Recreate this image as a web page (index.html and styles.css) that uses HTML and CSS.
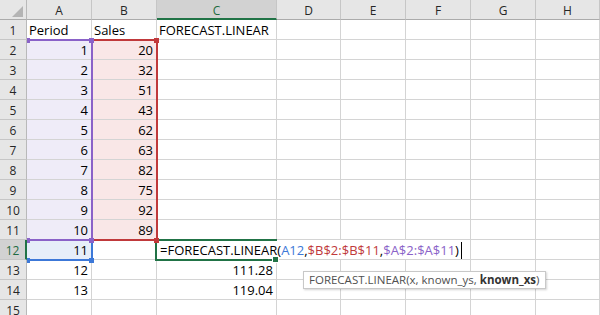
FILE: index.html
```html
<!DOCTYPE html>
<html>
<head>
<meta charset="utf-8">
<link rel="stylesheet" href="styles.css">
</head>
<body>
<div class="sheet">
  <div class="corner"><svg width="27" height="20" viewBox="0 0 27 20"><polygon points="23,6 23,17 12,17" fill="#b4b4b4"/></svg></div>
  <div class="h">A</div><div class="h">B</div><div class="h hsel">C</div><div class="h">D</div><div class="h">E</div><div class="h">F</div><div class="h">G</div><div class="h">H</div>

  <div class="rh">1</div><div class="c">Period</div><div class="c">Sales</div><div class="c">FORECAST.LINEAR</div><div class="c"></div><div class="c"></div><div class="c"></div><div class="c"></div><div class="c"></div>
  <div class="rh">2</div><div class="c n pa">1</div><div class="c n pb">20</div><div class="c"></div><div class="c"></div><div class="c"></div><div class="c"></div><div class="c"></div><div class="c"></div>
  <div class="rh">3</div><div class="c n pa">2</div><div class="c n pb">32</div><div class="c"></div><div class="c"></div><div class="c"></div><div class="c"></div><div class="c"></div><div class="c"></div>
  <div class="rh">4</div><div class="c n pa">3</div><div class="c n pb">51</div><div class="c"></div><div class="c"></div><div class="c"></div><div class="c"></div><div class="c"></div><div class="c"></div>
  <div class="rh">5</div><div class="c n pa">4</div><div class="c n pb">43</div><div class="c"></div><div class="c"></div><div class="c"></div><div class="c"></div><div class="c"></div><div class="c"></div>
  <div class="rh">6</div><div class="c n pa">5</div><div class="c n pb">62</div><div class="c"></div><div class="c"></div><div class="c"></div><div class="c"></div><div class="c"></div><div class="c"></div>
  <div class="rh">7</div><div class="c n pa">6</div><div class="c n pb">63</div><div class="c"></div><div class="c"></div><div class="c"></div><div class="c"></div><div class="c"></div><div class="c"></div>
  <div class="rh">8</div><div class="c n pa">7</div><div class="c n pb">82</div><div class="c"></div><div class="c"></div><div class="c"></div><div class="c"></div><div class="c"></div><div class="c"></div>
  <div class="rh">9</div><div class="c n pa">8</div><div class="c n pb">75</div><div class="c"></div><div class="c"></div><div class="c"></div><div class="c"></div><div class="c"></div><div class="c"></div>
  <div class="rh">10</div><div class="c n pa">9</div><div class="c n pb">92</div><div class="c"></div><div class="c"></div><div class="c"></div><div class="c"></div><div class="c"></div><div class="c"></div>
  <div class="rh">11</div><div class="c n pa">10</div><div class="c n pb">89</div><div class="c"></div><div class="c"></div><div class="c"></div><div class="c"></div><div class="c"></div><div class="c"></div>
  <div class="rh rsel">12</div><div class="c n bl">11</div><div class="c"></div><div class="c edit"><span>=FORECAST.LINEAR(</span><span class="fb">A12</span><span>,</span><span class="fr">$B$2:$B$11</span><span>,</span><span class="fp">$A$2:$A$11</span><span>)</span><span class="caret"></span></div><div class="c nor"></div><div class="c nor"></div><div class="c"></div><div class="c"></div><div class="c"></div>
  <div class="rh">13</div><div class="c n">12</div><div class="c"></div><div class="c n">111.28</div><div class="c"></div><div class="c"></div><div class="c"></div><div class="c"></div><div class="c"></div>
  <div class="rh">14</div><div class="c n">13</div><div class="c"></div><div class="c n">119.04</div><div class="c"></div><div class="c"></div><div class="c"></div><div class="c"></div><div class="c"></div>
  <div class="rh">15</div><div class="c"></div><div class="c"></div><div class="c"></div><div class="c"></div><div class="c"></div><div class="c"></div><div class="c"></div><div class="c"></div>

  <div class="rng rng-red"></div>
  <div class="rng rng-blue"></div>
  <div class="rng rng-purple"></div>
  <div class="rng active"></div>

  <div class="hd hd-red" style="left:154px;top:38px"></div>
  <div class="hd hd-red" style="left:154px;top:238px"></div>
  <div class="hd hd-blue" style="left:27px;top:258px;width:3px"></div>
  <div class="hd hd-blue" style="left:89px;top:258px"></div>
  <div class="hd hd-purple" style="left:27px;top:38px;width:3px"></div>
  <div class="hd hd-purple" style="left:89px;top:38px"></div>
  <div class="hd hd-purple" style="left:27px;top:238px;width:3px"></div>
  <div class="hd hd-purple" style="left:89px;top:238px"></div>
  <div class="hd hd-green" style="left:273px;top:257px"></div>

  <div class="tip">FORECAST.LINEAR(x, known_ys, <b>known_xs</b>)</div>
</div>
</body>
</html>
```
FILE: styles.css
```css
html, body {
  margin: 0;
  padding: 0;
  background: #ffffff;
  overflow: hidden;
}
.sheet {
  position: relative;
  width: 600px;
  height: 315px;
  overflow: hidden;
  display: grid;
  grid-template-columns: 27px 65px 65px 120px 64px 65px 65px 65px 64px;
  grid-template-rows: repeat(16, 20px);
  font-family: "Open Sans", sans-serif;
  color: #000;
}
.corner {
  background: #e6e6e6;
  border-right: 1px solid #b9b9b9;
  border-bottom: 1px solid #ababab;
  box-sizing: border-box;
}
.corner svg { display: block; }
.h {
  background: #e6e6e6;
  border-right: 1px solid #c6c6c6;
  border-bottom: 1px solid #ababab;
  box-sizing: border-box;
  text-align: center;
  font-size: 12px;
  line-height: 19px;
  padding-top: 1px;
  color: #262626;
}
.hsel {
  background: #d2d2d2;
  border-bottom: 2px solid #217346;
  color: #1e6b41;
}
.rh {
  background: #e6e6e6;
  border-right: 1px solid #b9b9b9;
  border-bottom: 1px solid #c6c6c6;
  box-sizing: border-box;
  text-align: center;
  font-size: 12px;
  line-height: 19px;
  padding-top: 1px;
  color: #262626;
}
.rsel {
  background: #d2d2d2;
  border-right: 2px solid #217346;
  color: #1e6b41;
}
.c {
  border-right: 1px solid #d4d4d4;
  border-bottom: 1px solid #d4d4d4;
  box-sizing: border-box;
  font-size: 13px;
  line-height: 19px;
  padding: 1px 2px 0 2px;
  white-space: nowrap;
}
.n {
  text-align: right;
  padding-right: 3px;
}
.pa { background: #efecf8; }
.pb { background: #f9e7e7; }
.bl { background: #e6eef9; }
.edit {
  position: relative;
  z-index: 2;
  border-right: none;
  overflow: visible;
  padding-left: 3px;
}
.nor { border-right: none; }
.fb { color: #3c78d8; }
.fr { color: #c0393b; }
.fp { color: #8a62c8; }
.caret {
  display: inline-block;
  width: 1px;
  height: 17px;
  background: #000;
  margin-left: 2px;
  vertical-align: -4px;
}
.rng {
  position: absolute;
  box-sizing: border-box;
  z-index: 3;
}
.rng-purple {
  left: 27px;
  top: 39px;
  width: 66px;
  height: 202px;
  border: 2px solid #8a62c8;
  border-left: none;
}
.rng-red {
  left: 93px;
  top: 39px;
  width: 65px;
  height: 202px;
  border: 2px solid #c0393b;
  border-left: none;
}
.rng-blue {
  left: 27px;
  top: 241px;
  width: 66px;
  height: 20px;
  border-right: 2px solid #3c78d8;
  border-bottom: 2px solid #3c78d8;
}
.active {
  left: 155px;
  top: 239px;
  width: 122px;
  height: 22px;
  border: 2px solid #217346;
  border-right: none;
}
.hd {
  position: absolute;
  width: 5px;
  height: 5px;
  z-index: 4;
}
.hd-purple { background: #8a62c8; }
.hd-red { background: #c0393b; }
.hd-blue { background: #3c78d8; }
.hd-green {
  background: #217346;
  width: 5px;
  height: 5px;
  box-shadow: 0 0 0 1px #ffffff;
}
.tip {
  position: absolute;
  z-index: 5;
  left: 303px;
  top: 271px;
  width: 243px;
  height: 18px;
  box-sizing: border-box;
  background: #ffffff;
  border: 1px solid #c8c8c8;
  box-shadow: 1px 1px 2px rgba(0, 0, 0, 0.18);
  font-family: "Open Sans", sans-serif;
  font-size: 11.5px;
  line-height: 15px;
  padding-left: 5px;
  color: #505050;
  white-space: nowrap;
}
.tip b {
  font-weight: 700;
  color: #333333;
}
```
